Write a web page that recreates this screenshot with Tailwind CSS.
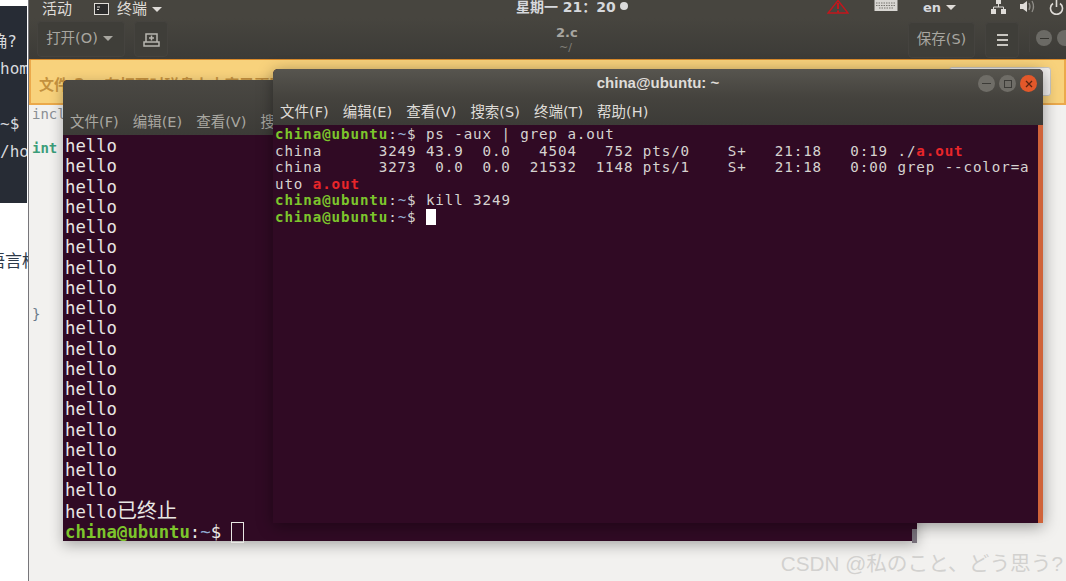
<!DOCTYPE html>
<html lang="zh">
<head>
    <meta charset="UTF-8">
    <title>Terminal</title>
    <script src="https://cdn.jsdelivr.net/npm/@tailwindcss/browser@4"></script>
</head>
<body class="bg-white">
<div class="relative w-[1066px] h-[581px] overflow-hidden bg-white font-['DejaVu_Sans','Noto_Sans_CJK_SC',sans-serif]">

    <!-- page behind the screenshot -->
    <div class="absolute left-0 top-[6px] w-[27px] h-[197px] bg-[#272c35] font-['DejaVu_Sans_Mono','Noto_Sans_CJK_SC',monospace] text-[#d8dade] text-[16px] overflow-hidden">
        <div class="absolute right-[10px] top-[24px] whitespace-nowrap">确?</div>
        <div class="absolute left-0 top-[51px] whitespace-nowrap">hom</div>
        <div class="absolute left-0 top-[106px] whitespace-nowrap">~$</div>
        <div class="absolute left-0 top-[134px] whitespace-nowrap">/ho</div>
    </div>
    <div class="absolute left-0 top-[249px] w-[28px] overflow-hidden text-[17px] leading-[24px] text-[#2d3a4a]">
        <div class="ml-[-12px] whitespace-nowrap">语言档</div>
    </div>

    <!-- desktop -->
    <div class="absolute left-[28px] top-0 w-[1038px] h-[581px] flex flex-col bg-[#f0efed] border-l border-[#77767a]">
        <div class="h-[18px] shrink-0 flex items-center bg-[#47453f] text-[#dfdcd8] text-[15px] relative overflow-hidden">
            <span class="ml-[13px]">活动</span>
            <svg class="ml-[22px]" width="15" height="12" viewBox="0 0 15 12"><rect x="0.5" y="0.5" width="14" height="11" fill="#2c2c2c" stroke="#e0ddd8"/><path d="M3 4h3M3 6.500h2" stroke="#e0ddd8"/></svg>
            <span class="ml-[8px]">终端</span>
            <span class="ml-[5px] w-0 h-0 border-x-[5px] border-x-transparent border-t-[5px] border-t-[#dfdcd8]"></span>
            <span class="absolute left-[487px] top-0 leading-[15px] text-[#d6d8dc] text-[14px] font-bold whitespace-nowrap">星期一 21：20</span>
            <span class="absolute left-[591px] top-[2px] w-[8px] h-[8px] rounded-full bg-[#dcdcdc]"></span>
            <svg class="absolute left-[798px] top-0" width="22" height="14" viewBox="0 0 22 14"><path d="M11 0.500L21 13H1Z" fill="none" stroke="#c4161c" stroke-width="1.400"/><path d="M11 3v6M11 10.500v2" stroke="#c4161c" stroke-width="2"/></svg>
            <svg class="absolute left-[845px] top-0" width="24" height="12" viewBox="0 0 24 12"><rect x="0.500" y="0" width="23" height="11" fill="#d8d6d2"/><path d="M2 3h20M2 5.500h20M5 8h14" stroke="#77756f" stroke-dasharray="1.500 1"/></svg>
            <span class="absolute left-[894px] top-0 leading-[15px] text-[13px] font-bold text-[#d6d8dc]">en</span>
            <span class="absolute left-[917px] top-[5px] w-0 h-0 border-x-[5px] border-x-transparent border-t-[5px] border-t-[#dfdcd8]"></span>
            <svg class="absolute left-[961px] top-0" width="17" height="14" viewBox="0 0 17 14"><path d="M6 0h5v4H6zM1 9h5v5H1zM11 9h5v5h-5z" fill="#dfdcd8"/><path d="M8.500 4v3M3.500 9V7h10v2" fill="none" stroke="#dfdcd8"/></svg>
            <svg class="absolute left-[990px] top-0" width="17" height="13" viewBox="0 0 17 13"><path d="M1 4h3l4-3v11l-4-3H1z" fill="#dfdcd8"/><path d="M10 3q2 3.500 0 7M13 1q3 5.500 0 11" fill="none" stroke="#8f8d88" stroke-width="1.300"/></svg>
            <svg class="absolute left-[1019px] top-0" width="17" height="15" viewBox="0 0 17 15"><path d="M5 3.500a6 6 0 1 0 7 0M8.500 0v7" fill="none" stroke="#dfdcd8" stroke-width="1.600"/></svg>
        </div>

        <!-- gedit header -->
        <div class="h-[42px] shrink-0 flex items-center bg-gradient-to-b from-[#47453f] to-[#3c3b37] border-b border-[#d98a2b] text-[#a8a6a0] text-[14.500px] relative">
            <div class="ml-[8px] w-[88px] h-[36px] pr-[3px] rounded-[4px] border border-[#45433f] bg-[#3f3e39] flex items-center justify-center gap-[5px]">
                <span>打开(O)</span>
                <span class="w-0 h-0 border-x-[5px] border-x-transparent border-t-[5px] border-t-[#a8a6a0]"></span>
            </div>
            <div class="ml-[9px] w-[34px] h-[36px] rounded-[4px] border border-[#45433f] bg-[#3f3e39] flex items-center justify-center">
                <svg class="mt-[2px]" width="17" height="14" viewBox="0 0 17 14"><path d="M3 9V1h11v8M1 13V9h15v4z" fill="none" stroke="#b8b6b0" stroke-width="1.500"/><path d="M8.500 2.500v5M6 5h5" stroke="#b8b6b0" stroke-width="1.500"/></svg>
            </div>
            <div class="absolute left-[527px] top-[8px] text-[13px] leading-[14px] font-bold text-[#a8a6a0]">2.c</div>
            <div class="absolute left-[530px] top-[23px] text-[11px] leading-[14px] text-[#807e78]">~/</div>
            <div class="absolute left-[879px] top-[4px] w-[67px] h-[36px] rounded-[4px] border border-[#45433f] bg-[#3f3e39] flex items-center justify-center whitespace-nowrap">保存(S)</div>
            <div class="absolute left-[956px] top-[4px] w-[34px] h-[36px] rounded-[4px] border border-[#45433f] bg-[#3f3e39] flex flex-col items-center justify-center gap-[3px]">
                <span class="w-[11px] h-[2px] bg-[#c8c6c0]"></span>
                <span class="w-[11px] h-[2px] bg-[#c8c6c0]"></span>
                <span class="w-[11px] h-[2px] bg-[#c8c6c0]"></span>
            </div>
            <div class="absolute left-[1000px] top-[8px] w-px h-[26px] bg-[#45433f]"></div>
            <div class="absolute left-[1007px] top-[12px] w-[16px] h-[16px] rounded-full bg-[#6b6a65] flex items-center justify-center"><span class="w-[9px] h-[1px] bg-[#35342f]"></span></div>
            <div class="absolute left-[1028px] top-[12px] w-[16px] h-[16px] rounded-full bg-[#6b6a65]"></div>
        </div>

        <!-- infobar -->
        <div class="h-[45px] shrink-0 bg-[#f8d27c] border-2 border-t-0 border-[#eba94b] pl-[8px] pt-[15px] text-[15px] leading-[20px] font-bold text-[#c4913e] relative whitespace-nowrap overflow-hidden">
            <span>文件 2.c 在打开时磁盘上内容已更改</span>
            <div class="absolute left-[918px] top-[7px] w-[102px] h-[29px] rounded-[3px] bg-[#f2f0ee] border border-[#c8c6c2]"></div>
        </div>

        <!-- editor -->
        <div class="flex-1 bg-[#f2f1ef] pl-[3px] font-['DejaVu_Sans_Mono',monospace] text-[14px]">
            <div class="leading-[16px] pt-[1px] text-[#8a8f94]">incl</div>
            <div class="leading-[16px] pt-[18px] font-bold text-[#3b9d7a]">int</div>
            <div class="leading-[16px] pt-[150px] text-[#6a7a8a]">}</div>
        </div>
    </div>

    <!-- back terminal -->
    <div class="absolute left-[63px] top-[80px] w-[854px] h-[461px] flex flex-col rounded-t-[5px] shadow-[0_4px_14px_rgba(0,0,0,0.3)] bg-[#300a24]">
        <div class="h-[55px] shrink-0 rounded-t-[5px] bg-gradient-to-b from-[#4a4843] to-[#3c3b37] pl-[7px] pt-[32px] flex gap-[14px] text-[#a9a7a1] text-[14.500px] leading-[20px] whitespace-nowrap overflow-hidden">
            <span>文件(F)</span><span>编辑(E)</span><span>查看(V)</span><span>搜索(S)</span>
        </div>
        <div class="flex-1 relative pl-[2px] pt-[1px] font-['DejaVu_Sans_Mono','Noto_Sans_CJK_SC',monospace] text-[17.300px] leading-[20.250px] text-[#e8e6e3] *:whitespace-pre">
            <div>hello</div>
            <div>hello</div>
            <div>hello</div>
            <div>hello</div>
            <div>hello</div>
            <div>hello</div>
            <div>hello</div>
            <div>hello</div>
            <div>hello</div>
            <div>hello</div>
            <div>hello</div>
            <div>hello</div>
            <div>hello</div>
            <div>hello</div>
            <div>hello</div>
            <div>hello</div>
            <div>hello</div>
            <div>hello</div>
            <div>hello<span class="text-[20px] leading-[20px]">已终止</span></div>
            <div class="flex items-center"><span class="font-bold text-[#7dc52c]">china@ubuntu</span><span>:</span><span class="text-[#8fa9d0]">~</span><span>$ </span><span class="w-[13px] h-[21px] border border-[#e8e6e3]"></span></div>
            <div class="absolute right-0 bottom-0 w-[5px] h-[14px] bg-[#77707a]"></div>
        </div>
    </div>

    <!-- front terminal -->
    <div class="absolute left-[273px] top-[69px] w-[770px] h-[454px] flex flex-col rounded-t-[5px] shadow-[0_3px_16px_rgba(0,0,0,0.4)] bg-[#300a24]">
        <div class="h-[56px] shrink-0 rounded-t-[5px] bg-gradient-to-b from-[#57554f] via-[#45433e] to-[#3c3b37] relative text-[14.500px] whitespace-nowrap">
            <div class="absolute inset-x-0 top-[5px] text-center font-bold font-['Liberation_Sans',sans-serif] text-[15px] leading-[18px] text-[#dfdcd8]">china@ubuntu: ~</div>
            <div class="absolute left-[7px] top-[33px] flex gap-[14px] text-[#dfdcd8] leading-[20px]">
                <span>文件(F)</span><span>编辑(E)</span><span>查看(V)</span><span>搜索(S)</span><span>终端(T)</span><span>帮助(H)</span>
            </div>
            <div class="absolute left-[705px] top-[6px] w-[17px] h-[17px] rounded-full bg-[#6f6d67] flex items-center justify-center"><span class="w-[9px] h-[1.500px] bg-[#3c3b37]"></span></div>
            <div class="absolute left-[726px] top-[6px] w-[17px] h-[17px] rounded-full bg-[#6f6d67] flex items-center justify-center"><span class="w-[8px] h-[8px] border border-[#3c3b37]"></span></div>
            <div class="absolute left-[747px] top-[6px] w-[17px] h-[17px] rounded-full bg-[#e2582a] flex items-center justify-center">
                <svg width="8" height="8" viewBox="0 0 8 8"><path d="M1 1l6 6M7 1l-6 6" stroke="#5a2410" stroke-width="1.300"/></svg>
            </div>
        </div>
        <div class="flex-1 relative pl-[2px] pt-[1px] font-['DejaVu_Sans_Mono',monospace] text-[14.200px] tracking-[0.890px] leading-[16.600px] text-[#d6d3d0] *:whitespace-pre">
            <div><span class="font-bold text-[#7dc52c]">china@ubuntu</span>:<span class="text-[#8fa9d0]">~</span>$ ps -aux | grep a.out</div>
            <div>china      3249 43.9  0.0   4504   752 pts/0    S+   21:18   0:19 ./<span class="font-bold text-[#e8262a]">a.out</span></div>
            <div>china      3273  0.0  0.0  21532  1148 pts/1    S+   21:18   0:00 grep --color=a</div>
            <div>uto <span class="font-bold text-[#e8262a]">a.out</span></div>
            <div><span class="font-bold text-[#7dc52c]">china@ubuntu</span>:<span class="text-[#8fa9d0]">~</span>$ kill 3249</div>
            <div class="flex items-center"><span class="font-bold text-[#7dc52c]">china@ubuntu</span><span>:</span><span class="text-[#8fa9d0]">~</span><span>$ </span><span class="w-[10px] h-[16px] bg-white"></span></div>
            <div class="absolute right-0 top-0 bottom-0 w-[5px] bg-[#d0633a]"></div>
        </div>
    </div>

    <!-- watermark -->
    <div class="absolute right-[3px] top-[551px] whitespace-nowrap text-[20.700px] leading-[26px] text-[#d2d1cf] font-['Liberation_Sans','Noto_Sans_CJK_JP',sans-serif]">CSDN @私のこと、どう思う?</div>
</div>
</body>
</html>
